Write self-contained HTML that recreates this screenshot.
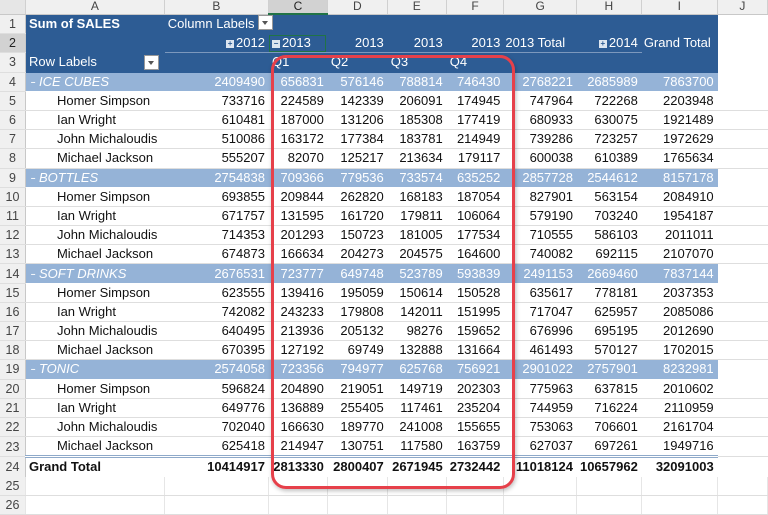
<!DOCTYPE html>
<html><head><meta charset="utf-8"><style>
body{margin:0;width:768px;height:508px;overflow:hidden;background:#fff;font-family:"Liberation Sans",Arial,sans-serif;}
table{border-collapse:collapse;table-layout:fixed;position:absolute;left:0;top:0;}
td{height:18.2px;padding:0 3px;font-size:13px;white-space:nowrap;overflow:hidden;border-bottom:1px solid #dedede;border-right:1px solid transparent;color:#111;text-align:right;line-height:18px;}
tr.h td{height:13px;background:#f0f0f0;color:#444;text-align:center;font-size:12px;border-right:1px solid #d0d0d0;border-bottom:1px solid #c8c8c8;line-height:13px}
td.rn{background:#f0f0f0;color:#444;text-align:center;border-right:1px solid #c8c8c8;font-size:12.5px;padding:0}
td.l{text-align:left}
td.nm{text-align:left;padding-left:31px}
tr.d td.p{background:#2d5c94;color:#fff;border-color:#2d5c94}
tr.b td.p{background:#95b3d7;color:#fff;border-bottom:1px solid #fff;border-right-color:#95b3d7}
tr.b td.i{font-style:italic}
tr.g td{font-weight:bold;border-top:3px double #8ea9c9;border-bottom:none}
td.hl{background:#d2d2d2 !important;color:#222 !important}
tr.e td{border-right:1px solid #e6e6e6}
.sel{outline:1.5px solid #217346;outline-offset:-2px}
.bx{display:inline-block;width:8px;height:8px;background:#dde6f0;color:#2d5c94;font-size:8px;line-height:8px;text-align:center;vertical-align:1px;margin-right:2px;font-weight:bold}
.dd{display:inline-block;width:13px;height:13px;background:#fff;border:1px solid #999;vertical-align:-2px;position:relative}
.dd:after{content:"";position:absolute;left:3px;top:5px;border:3.5px solid transparent;border-top:4px solid #555}
#box{position:absolute;left:271px;top:55px;width:238px;height:428px;border:3px solid #e6404a;border-radius:15px;box-shadow:1px 2px 4px rgba(0,0,0,.25)}
</style></head><body>
<table>
<colgroup><col style="width:26px"><col style="width:139px"><col style="width:106px"><col style="width:59px"><col style="width:60px"><col style="width:59px"><col style="width:56px"><col style="width:73px"><col style="width:62px"><col style="width:76px"><col style="width:52px"></colgroup>
<tr class="h"><td style="background:#e6e6e6"></td><td>A</td><td>B</td><td class="hl" style="border-bottom:2px solid #217346">C</td><td>D</td><td>E</td><td>F</td><td>G</td><td>H</td><td>I</td><td>J</td></tr>
<tr class="d"><td class="rn">1</td><td class="p l" style="font-weight:bold">Sum of SALES</td><td class="p l" colspan="2" style="padding-left:3px">Column Labels <span class="dd"></span></td><td class="p"></td><td class="p"></td><td class="p"></td><td class="p"></td><td class="p"></td><td class="p"></td><td style="border:none"></td></tr>
<tr class="d"><td class="rn hl">2</td><td class="p"></td><td class="p" style="border-bottom-color:#7c98bd"><span class="bx">+</span>2012</td><td class="p sel" style="text-align:left;border-bottom-color:#7c98bd"><span class="bx">−</span>2013</td><td class="p" style="border-bottom-color:#7c98bd">2013</td><td class="p" style="border-bottom-color:#7c98bd">2013</td><td class="p" style="border-bottom-color:#7c98bd">2013</td><td class="p l" style="padding-left:1px;border-bottom-color:#7c98bd">2013 Total</td><td class="p" style="border-bottom-color:#7c98bd"><span class="bx">+</span>2014</td><td class="p l" style="padding-left:2px">Grand Total</td><td style="border:none"></td></tr>
<tr class="d"><td class="rn">3</td><td class="p l" style="border-right:none">Row Labels <span class="dd" style="float:right;margin-top:2px;margin-right:2px"></span></td><td class="p"></td><td class="p l">Q1</td><td class="p l">Q2</td><td class="p l">Q3</td><td class="p l">Q4</td><td class="p"></td><td class="p"></td><td class="p"></td><td style="border:none"></td></tr>
<tr class="b"><td class="rn">4</td><td class="p l i"><span class="bx" style="background:none;color:#fff">−</span>ICE CUBES</td><td class="p">2409490</td><td class="p">656831</td><td class="p">576146</td><td class="p">788814</td><td class="p">746430</td><td class="p">2768221</td><td class="p">2685989</td><td class="p">7863700</td><td style="border:none"></td></tr>
<tr><td class="rn">5</td><td class="nm">Homer Simpson</td><td>733716</td><td>224589</td><td>142339</td><td>206091</td><td>174945</td><td>747964</td><td>722268</td><td>2203948</td><td></td></tr>
<tr><td class="rn">6</td><td class="nm">Ian Wright</td><td>610481</td><td>187000</td><td>131206</td><td>185308</td><td>177419</td><td>680933</td><td>630075</td><td>1921489</td><td></td></tr>
<tr><td class="rn">7</td><td class="nm">John Michaloudis</td><td>510086</td><td>163172</td><td>177384</td><td>183781</td><td>214949</td><td>739286</td><td>723257</td><td>1972629</td><td></td></tr>
<tr><td class="rn">8</td><td class="nm">Michael Jackson</td><td>555207</td><td>82070</td><td>125217</td><td>213634</td><td>179117</td><td>600038</td><td>610389</td><td>1765634</td><td></td></tr>
<tr class="b"><td class="rn">9</td><td class="p l i"><span class="bx" style="background:none;color:#fff">−</span>BOTTLES</td><td class="p">2754838</td><td class="p">709366</td><td class="p">779536</td><td class="p">733574</td><td class="p">635252</td><td class="p">2857728</td><td class="p">2544612</td><td class="p">8157178</td><td style="border:none"></td></tr>
<tr><td class="rn">10</td><td class="nm">Homer Simpson</td><td>693855</td><td>209844</td><td>262820</td><td>168183</td><td>187054</td><td>827901</td><td>563154</td><td>2084910</td><td></td></tr>
<tr><td class="rn">11</td><td class="nm">Ian Wright</td><td>671757</td><td>131595</td><td>161720</td><td>179811</td><td>106064</td><td>579190</td><td>703240</td><td>1954187</td><td></td></tr>
<tr><td class="rn">12</td><td class="nm">John Michaloudis</td><td>714353</td><td>201293</td><td>150723</td><td>181005</td><td>177534</td><td>710555</td><td>586103</td><td>2011011</td><td></td></tr>
<tr><td class="rn">13</td><td class="nm">Michael Jackson</td><td>674873</td><td>166634</td><td>204273</td><td>204575</td><td>164600</td><td>740082</td><td>692115</td><td>2107070</td><td></td></tr>
<tr class="b"><td class="rn">14</td><td class="p l i"><span class="bx" style="background:none;color:#fff">−</span>SOFT DRINKS</td><td class="p">2676531</td><td class="p">723777</td><td class="p">649748</td><td class="p">523789</td><td class="p">593839</td><td class="p">2491153</td><td class="p">2669460</td><td class="p">7837144</td><td style="border:none"></td></tr>
<tr><td class="rn">15</td><td class="nm">Homer Simpson</td><td>623555</td><td>139416</td><td>195059</td><td>150614</td><td>150528</td><td>635617</td><td>778181</td><td>2037353</td><td></td></tr>
<tr><td class="rn">16</td><td class="nm">Ian Wright</td><td>742082</td><td>243233</td><td>179808</td><td>142011</td><td>151995</td><td>717047</td><td>625957</td><td>2085086</td><td></td></tr>
<tr><td class="rn">17</td><td class="nm">John Michaloudis</td><td>640495</td><td>213936</td><td>205132</td><td>98276</td><td>159652</td><td>676996</td><td>695195</td><td>2012690</td><td></td></tr>
<tr><td class="rn">18</td><td class="nm">Michael Jackson</td><td>670395</td><td>127192</td><td>69749</td><td>132888</td><td>131664</td><td>461493</td><td>570127</td><td>1702015</td><td></td></tr>
<tr class="b"><td class="rn">19</td><td class="p l i"><span class="bx" style="background:none;color:#fff">−</span>TONIC</td><td class="p">2574058</td><td class="p">723356</td><td class="p">794977</td><td class="p">625768</td><td class="p">756921</td><td class="p">2901022</td><td class="p">2757901</td><td class="p">8232981</td><td style="border:none"></td></tr>
<tr><td class="rn">20</td><td class="nm">Homer Simpson</td><td>596824</td><td>204890</td><td>219051</td><td>149719</td><td>202303</td><td>775963</td><td>637815</td><td>2010602</td><td></td></tr>
<tr><td class="rn">21</td><td class="nm">Ian Wright</td><td>649776</td><td>136889</td><td>255405</td><td>117461</td><td>235204</td><td>744959</td><td>716224</td><td>2110959</td><td></td></tr>
<tr><td class="rn">22</td><td class="nm">John Michaloudis</td><td>702040</td><td>166630</td><td>189770</td><td>241008</td><td>155655</td><td>753063</td><td>706601</td><td>2161704</td><td></td></tr>
<tr><td class="rn">23</td><td class="nm">Michael Jackson</td><td>625418</td><td>214947</td><td>130751</td><td>117580</td><td>163759</td><td>627037</td><td>697261</td><td>1949716</td><td></td></tr>
<tr class="g"><td class="rn" style="font-weight:normal;border-top:none">24</td><td class="l">Grand Total</td><td>10414917</td><td>2813330</td><td>2800407</td><td>2671945</td><td>2732442</td><td>11018124</td><td>10657962</td><td>32091003</td><td style="border-top:none"></td></tr>
<tr class="e"><td class="rn">25</td><td></td><td></td><td></td><td></td><td></td><td></td><td></td><td></td><td></td><td></td></tr>
<tr class="e"><td class="rn">26</td><td></td><td></td><td></td><td></td><td></td><td></td><td></td><td></td><td></td><td></td></tr>
</table>
<div id="box"></div>
</body></html>
